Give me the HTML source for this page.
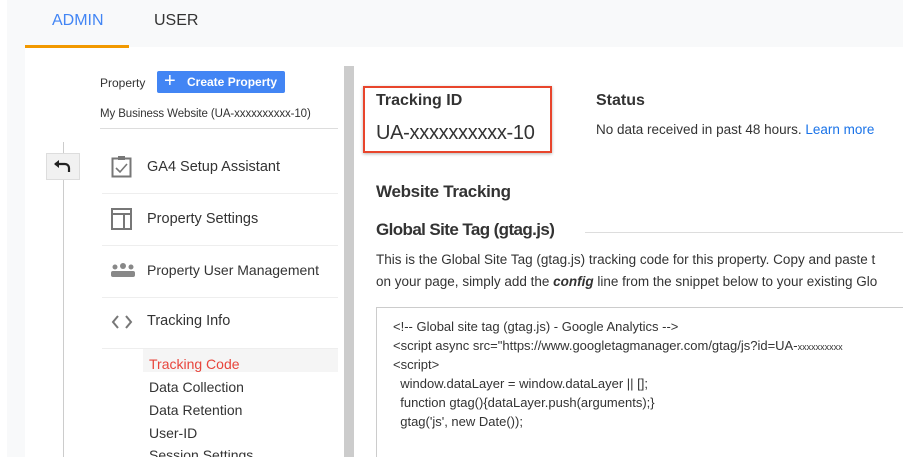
<!DOCTYPE html><html><head><style>
html,body{margin:0;width:920px;height:466px;overflow:hidden}
body{background:#fff;font-family:"Liberation Sans",Arial,sans-serif;position:relative;color:#333}
.a{position:absolute;white-space:nowrap}
</style></head><body>
<div class="a" style="left:7px;top:0;width:913px;height:466px;background:#f8f9fa"></div>
<div class="a" style="left:25px;top:47px;width:895px;height:419px;background:#fff"></div>
<div class="a" style="left:25px;top:45px;width:104px;height:3px;background:#f29900"></div>
<div class="a" style="left:52px;top:12px;font-size:16px;color:#4285f4">ADMIN</div>
<div class="a" style="left:154px;top:12px;font-size:16px;color:#333">USER</div>
<div class="a" style="left:344px;top:66px;width:10px;height:400px;background:#ccc"></div>
<div class="a" style="left:63px;top:142px;width:1px;height:324px;background:#ccc"></div>
<div class="a" style="left:46px;top:153px;width:34px;height:27px;background:#f1f1f1;border:1px solid #ddd;box-sizing:border-box"></div>
<svg class="a" style="left:53px;top:159px" width="20" height="14"><path d="M2 5h10a4 4 0 0 1 4 4v4" fill="none" stroke="#222" stroke-width="2.2"/><path d="M1 5l5-4v8z" fill="#222"/></svg>
<div class="a" style="left:100px;top:76px;font-size:12px">Property</div>
<div class="a" style="left:157px;top:71px;width:128px;height:22px;background:#4285f4;border-radius:2px;color:#fff;font-size:12px;font-weight:bold;line-height:22px"><span style="font-size:20px;font-weight:normal;position:absolute;left:7px;top:-1px">+</span><span style="position:absolute;left:30px">Create Property</span></div>
<div class="a" style="left:100px;top:108px;font-size:11.5px;letter-spacing:-0.1px">My Business Website (UA-xxxxxxxxxx-10)</div>
<div class="a" style="left:100px;top:128px;width:238px;height:1px;background:#ddd"></div>
<div class="a" style="left:102px;top:193px;width:236px;height:1px;background:#eee"></div>
<div class="a" style="left:102px;top:245px;width:236px;height:1px;background:#eee"></div>
<div class="a" style="left:102px;top:297px;width:236px;height:1px;background:#eee"></div>
<div class="a" style="left:102px;top:348px;width:236px;height:1px;background:#eee"></div>
<svg class="a" style="left:110px;top:155px" width="24" height="24"><rect x="2.5" y="3.5" width="18" height="18" fill="none" stroke="#777" stroke-width="2"/><rect x="8" y="1" width="7" height="4" fill="#777"/><path d="M6 13l4 4 7-8" fill="none" stroke="#777" stroke-width="1.6"/></svg>
<svg class="a" style="left:110px;top:207px" width="24" height="24"><rect x="2" y="2" width="19" height="20" fill="none" stroke="#777" stroke-width="2"/><path d="M2 7h19M14 7v15" stroke="#777" stroke-width="2"/></svg>
<svg class="a" style="left:110px;top:262px" width="26" height="16"><circle cx="5" cy="5" r="2.5" fill="#888"/><circle cx="13" cy="4" r="3" fill="#888"/><circle cx="21" cy="5" r="2.5" fill="#888"/><rect x="1" y="9" width="24" height="6" rx="2" fill="#888"/></svg>
<svg class="a" style="left:110px;top:314px" width="24" height="16"><path d="M8 2L3 8l5 6M16 2l5 6-5 6" fill="none" stroke="#777" stroke-width="2"/></svg>
<div class="a" style="left:147px;top:159px;font-size:14.5px">GA4 Setup Assistant</div>
<div class="a" style="left:147px;top:211px;font-size:14.5px">Property Settings</div>
<div class="a" style="left:147px;top:262px;font-size:14px">Property User Management</div>
<div class="a" style="left:147px;top:313px;font-size:14.5px">Tracking Info</div>
<div class="a" style="left:143px;top:349px;width:195px;height:23px;background:#f5f5f5"></div>
<div class="a" style="left:149px;top:356px;font-size:14px;color:#e8453c">Tracking Code</div>
<div class="a" style="left:149px;top:379px;font-size:14px">Data Collection</div>
<div class="a" style="left:149px;top:402px;font-size:14px">Data Retention</div>
<div class="a" style="left:149px;top:425px;font-size:14px">User-ID</div>
<div class="a" style="left:149px;top:447px;font-size:14px">Session Settings</div>
<div class="a" style="left:363px;top:86px;width:189px;height:67px;border:2px solid #e8452c;box-sizing:border-box;box-shadow:0 1px 3px rgba(0,0,0,.3)"></div>
<div class="a" style="left:376px;top:92px;font-size:16px;font-weight:bold">Tracking ID</div>
<div class="a" style="left:376px;top:122px;font-size:20px;letter-spacing:-0.3px">UA-xxxxxxxxxx-10</div>
<div class="a" style="left:596px;top:92px;font-size:16px;font-weight:bold">Status</div>
<div class="a" style="left:596px;top:122px;font-size:13.5px">No data received in past 48 hours. <span style="color:#1a73e8">Learn more</span></div>
<div class="a" style="left:376px;top:182px;font-size:17px;font-weight:bold;letter-spacing:-0.3px">Website Tracking</div>
<div class="a" style="left:376px;top:220px;font-size:17px;font-weight:bold;letter-spacing:-0.6px">Global Site Tag (gtag.js)</div>
<div class="a" style="left:585px;top:232px;width:335px;height:1px;background:#ddd"></div>
<div class="a" style="left:376px;top:249px;font-size:13.5px;line-height:22px">This is the Global Site Tag (gtag.js) tracking code for this property. Copy and paste t<br>on your page, simply add the <b><i>config</i></b> line from the snippet below to your existing Glo</div>
<div class="a" style="left:376px;top:307px;width:560px;height:159px;border:1px solid #ccc;box-sizing:border-box"></div>
<div class="a" style="left:393px;top:318px;font-size:13px;line-height:18.7px">&lt;!-- Global site tag (gtag.js) - Google Analytics --&gt;<br>&lt;script async src="https://www.googletagmanager.com/gtag/js?id=UA-<span style="font-size:9px">xxxxxxxxxx</span><br>&lt;script&gt;<br>&nbsp;&nbsp;window.dataLayer = window.dataLayer || [];<br>&nbsp;&nbsp;function gtag(){dataLayer.push(arguments);}<br>&nbsp;&nbsp;gtag('js', new Date());</div>
<div class="a" style="left:0;top:457px;width:920px;height:9px;background:#fff"></div>
<div class="a" style="left:903px;top:0;width:17px;height:466px;background:#fff"></div>
</body></html>
